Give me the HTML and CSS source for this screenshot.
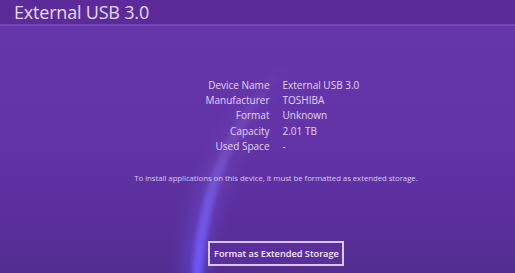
FILE: index.html
```html
<!DOCTYPE html>
<html>
<head>
<meta charset="utf-8">
<link rel="stylesheet" href="styles.css">
</head>
<body>
<div class="screen">
  <svg class="streak" width="515" height="273" viewBox="0 0 515 273">
    <defs>
      <linearGradient id="g" x1="0" y1="1" x2="0" y2="0">
        <stop offset="0" stop-color="#6a58ff" stop-opacity="0.95"/>
        <stop offset="0.35" stop-color="#7a62f2" stop-opacity="0.65"/>
        <stop offset="0.6" stop-color="#9274e4" stop-opacity="0.25"/>
        <stop offset="1" stop-color="#9a74e0" stop-opacity="0"/>
      </linearGradient>
      <filter id="b" x="-50%" y="-50%" width="200%" height="200%"><feGaussianBlur stdDeviation="2"/></filter>
      <filter id="b2" x="-50%" y="-50%" width="200%" height="200%"><feGaussianBlur stdDeviation="8"/></filter>
    </defs>
    <path d="M194 276 C 198 235, 206 195, 224 155 S 264 90, 285 62" stroke="url(#g)" stroke-width="26" fill="none" filter="url(#b2)" opacity="0.45"/>
    <path d="M197 276 C 200 235, 207 195, 225 155 S 264 90, 285 62" stroke="url(#g)" stroke-width="10" fill="none" filter="url(#b)"/>
  </svg>
  <header class="top">
    <h1 class="title">External USB 3.0</h1>
  </header>
  <main class="content">
    <dl class="info">
      <dt>Device Name</dt><dd>External USB 3.0</dd>
      <dt>Manufacturer</dt><dd>TOSHIBA</dd>
      <dt>Format</dt><dd>Unknown</dd>
      <dt>Capacity</dt><dd>2.01 TB</dd>
      <dt>Used Space</dt><dd>-</dd>
    </dl>
    <p class="note">To install applications on this device, it must be formatted as extended storage.</p>
    <button class="btn">Format as Extended Storage</button>
  </main>
</div>
</body>
</html>
```
FILE: styles.css
```css
html, body { margin: 0; padding: 0; }
body { width: 515px; height: 273px; overflow: hidden; font-family: "Open Sans", "Noto Sans", sans-serif; }
.screen {
  position: relative;
  width: 515px; height: 273px;
  background: linear-gradient(180deg, #6636aa 0%, #6234a8 50%, #5a2f9c 80%, #532d90 100%);
  display: flex; flex-direction: column;
  overflow: hidden;
}
.streak { position: absolute; left: 0; top: 0; pointer-events: none; }
.top {
  position: relative;
  height: 24px;
  background: #5b2c99;
  border-bottom: 2px solid #7447b8;
  display: flex; align-items: center;
  padding-left: 14px;
}
.title {
  margin: 0; font-weight: 400; font-size: 18px; color: #e6d9f7;
  line-height: 24px; letter-spacing: -0.2px;
}
.content {
  position: relative;
  flex: 1;
  display: flex; flex-direction: column; align-items: center;
  padding-left: 37px;
}
.info {
  margin: 52px 0 0 0;
  display: grid;
  grid-template-columns: 140px 140px;
  column-gap: 13px;
  font-size: 10px;
  line-height: 15.2px;
  color: #e2d6f4;
}
.info dt { text-align: right; }
.info dd { margin: 0; text-align: left; }
.note {
  margin: 19px 0 0 0;
  font-size: 7.8px;
  color: #d8caf0;
  letter-spacing: -0.05px;
}
.btn {
  margin-top: 58px;
  font-family: inherit;
  font-size: 9.2px;
  font-weight: 600;
  white-space: nowrap;
  color: #f3ecfb;
  background: #5a2f9c;
  border: 2px solid #d7c7f0;
  padding: 0 4px;
  height: 25px;
  width: 136px;
  cursor: pointer;
}
```
